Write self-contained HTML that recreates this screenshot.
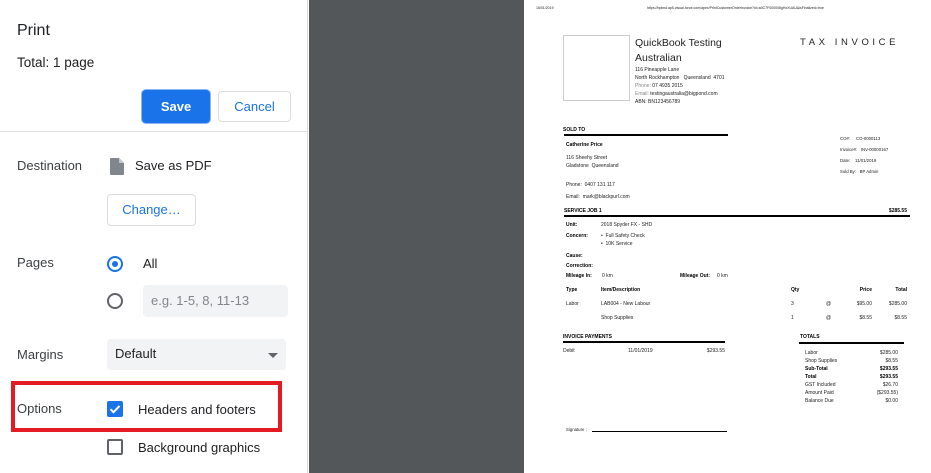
<!DOCTYPE html>
<html><head><meta charset="utf-8"><style>
*{margin:0;padding:0;box-sizing:border-box}
body{width:931px;height:473px;overflow:hidden;position:relative;background:#fff;font-family:"Liberation Sans",sans-serif;color:#202124}
.a{position:absolute;white-space:nowrap}
.l{font-size:13px;color:#3c4043}
.p{font-size:5px;color:#222;line-height:1}
.b{font-weight:bold;color:#000}
.rule{position:absolute;height:2px;background:#000}
</style></head><body>
<div class="a" style="left:0;top:0;width:308px;height:473px;background:#fff;border-right:1px solid #dadce0"></div>
<div class="a" style="left:309px;top:0;width:215px;height:473px;background:#53575a"></div>
<div class="a" style="left:524px;top:1px;width:407px;height:472px;background:#fff"></div>

<div class="a" style="left:17px;top:22px;font-size:16px;color:#202124">Print</div>
<div class="a" style="left:17px;top:55px;font-size:13.5px;color:#202124">Total: 1 page</div>
<div class="a" style="left:142px;top:90px;width:68px;height:33px;background:#1a73e8;border-radius:4px;color:#fff;font-size:13px;font-weight:bold;text-align:center;line-height:33px;box-shadow:0 0 0 1px #8ab4f8">Save</div>
<div class="a" style="left:218px;top:91px;width:73px;height:31px;border:1px solid #dadce0;border-radius:4px;color:#1a73e8;font-size:13px;text-align:center;line-height:29px">Cancel</div>
<div class="a" style="left:0;top:131px;width:308px;height:1px;background:#e0e0e0"></div>

<div class="a l" style="left:17px;top:158px">Destination</div>
<svg class="a" style="left:110px;top:158px" width="14" height="17" viewBox="0 0 14 17"><path d="M1 0h8l5 5v11a1 1 0 0 1-1 1H1a1 1 0 0 1-1-1V1a1 1 0 0 1 1-1z" fill="#80868b"/><path d="M9 0v5h5z" fill="#c4c7ca"/></svg>
<div class="a l" style="left:135px;top:158px;color:#202124">Save as PDF</div>
<div class="a" style="left:107px;top:194px;width:89px;height:32px;border:1px solid #dadce0;border-radius:4px;color:#1a73e8;font-size:13px;text-align:center;line-height:30px">Change…</div>

<div class="a l" style="left:17px;top:255px">Pages</div>
<div class="a" style="left:107px;top:256px;width:16px;height:16px;border:2px solid #1a73e8;border-radius:50%"><div style="position:absolute;left:3px;top:3px;width:6px;height:6px;background:#1a73e8;border-radius:50%"></div></div>
<div class="a l" style="left:143px;top:256px;color:#202124">All</div>
<div class="a" style="left:107px;top:293px;width:16px;height:16px;border:2px solid #5f6368;border-radius:50%"></div>
<div class="a" style="left:143px;top:285px;width:145px;height:32px;background:#f1f3f4;border-radius:4px;font-size:13px;color:#80868b;padding:8px 0 0 8px">e.g. 1-5, 8, 11-13</div>

<div class="a l" style="left:17px;top:347px">Margins</div>
<div class="a" style="left:107px;top:339px;width:179px;height:31px;background:#f1f3f4;border-radius:4px;font-size:13px;color:#202124;padding:7px 0 0 8px">Default</div>
<div class="a" style="left:268px;top:353px;width:0;height:0;border-left:5px solid transparent;border-right:5px solid transparent;border-top:5px solid #5f6368"></div>

<div class="a" style="left:11px;top:381px;width:271px;height:51px;border:4px solid #e51b24"></div>
<div class="a l" style="left:17px;top:401px">Options</div>
<div class="a" style="left:107px;top:401px;width:16px;height:16px;background:#1a73e8;border-radius:2px"><svg width="16" height="16" viewBox="0 0 16 16"><path d="M3.5 8.2l3 3 6-6.2" stroke="#fff" stroke-width="2" fill="none"/></svg></div>
<div class="a l" style="left:138px;top:402px;color:#202124">Headers and footers</div>
<div class="a" style="left:107px;top:439px;width:16px;height:16px;border:2px solid #5f6368;border-radius:2px"></div>
<div class="a l" style="left:138px;top:440px;color:#202124">Background graphics</div>

<!-- page -->
<div class="a p" style="left:536px;top:7px;font-size:3.5px">16/01/2019</div>
<div class="a p" style="left:647px;top:7px;font-size:3.5px">https://bplmd.ap5.visual.force.com/apex/PrintCustomerOrderInvoice?id=a0C7F000008gHxXUAU&amp;isFinalized=true</div>
<div class="a" style="left:563px;top:35px;width:67px;height:66px;border:1px solid #ccc"></div>
<div class="a" style="left:635px;top:37px;font-size:10.5px;color:#222">QuickBook Testing</div>
<div class="a" style="left:635px;top:52px;font-size:10.5px;color:#222">Australian</div>
<div class="a p" style="left:635px;top:68px">116 Pineapple Lane</div>
<div class="a p" style="left:635px;top:76px">North Rockhampton &nbsp; Queensland &nbsp;4701</div>
<div class="a p" style="left:635px;top:84px"><span style="color:#888">Phone:</span> 07 4935 2015</div>
<div class="a p" style="left:635px;top:92px"><span style="color:#888">Email:</span> testingaustralia@bigpond.com</div>
<div class="a p" style="left:635px;top:100px">ABN: BN123456789</div>
<div class="a" style="left:800px;top:37px;font-size:9.5px;letter-spacing:3.6px;color:#222">TAX INVOICE</div>

<div class="a p b" style="left:563px;top:128px">SOLD TO</div>
<div class="rule" style="left:564px;top:134px;width:164px"></div>
<div class="a p b" style="left:566px;top:143px">Catherine Price</div>
<div class="a p" style="left:566px;top:156px">116 Sheehy Street</div>
<div class="a p" style="left:566px;top:164px">Gladstone &nbsp;Queensland</div>
<div class="a p" style="left:566px;top:183px">Phone: &nbsp;0407 131 117</div>
<div class="a p" style="left:566px;top:195px">Email: &nbsp;mark@blackpurl.com</div>
<div class="a p" style="left:840px;top:137px;font-size:4.3px">CO#: &nbsp; &nbsp; CO-0000113</div>
<div class="a p" style="left:840px;top:148px;font-size:4.3px">Invoice#: &nbsp; INV-00000167</div>
<div class="a p" style="left:840px;top:159px;font-size:4.3px">Date: &nbsp; &nbsp;11/01/2019</div>
<div class="a p" style="left:840px;top:170px;font-size:4.3px">Sold By: &nbsp; BP Admin</div>

<div class="a p b" style="left:564px;top:209px">SERVICE JOB 1</div>
<div class="a p b" style="left:877px;top:209px;width:30px;text-align:right">$285.55</div>
<div class="rule" style="left:564px;top:215px;width:346px"></div>
<div class="a p b" style="left:566px;top:223px">Unit:</div><div class="a p" style="left:601px;top:223px">2018 Spyder FX - SHD</div>
<div class="a p b" style="left:566px;top:234px">Concern:</div>
<div class="a p" style="left:601px;top:234px">• &nbsp;Full Safety Check</div>
<div class="a p" style="left:601px;top:242px">• &nbsp;10K Service</div>
<div class="a p b" style="left:566px;top:254px">Cause:</div>
<div class="a p b" style="left:566px;top:264px">Correction:</div>
<div class="a p b" style="left:566px;top:274px">Mileage In:</div><div class="a p" style="left:602px;top:274px">0 km</div>
<div class="a p b" style="left:680px;top:274px">Mileage Out:</div><div class="a p" style="left:717px;top:274px">0 km</div>
<div class="a p b" style="left:566px;top:288px">Type</div><div class="a p b" style="left:601px;top:288px">Item/Description</div>
<div class="a p b" style="left:791px;top:288px">Qty</div>
<div class="a p b" style="left:852px;top:288px;width:20px;text-align:right">Price</div>
<div class="a p b" style="left:887px;top:288px;width:20px;text-align:right">Total</div>
<div class="a p" style="left:566px;top:302px">Labor</div><div class="a p" style="left:601px;top:302px">LAB004 - New Labour</div>
<div class="a p" style="left:791px;top:302px">3</div><div class="a p" style="left:826px;top:302px">@</div>
<div class="a p" style="left:842px;top:302px;width:30px;text-align:right">$95.00</div>
<div class="a p" style="left:877px;top:302px;width:30px;text-align:right">$285.00</div>
<div class="a p" style="left:601px;top:316px">Shop Supplies</div>
<div class="a p" style="left:791px;top:316px">1</div><div class="a p" style="left:826px;top:316px">@</div>
<div class="a p" style="left:842px;top:316px;width:30px;text-align:right">$8.55</div>
<div class="a p" style="left:877px;top:316px;width:30px;text-align:right">$8.55</div>

<div class="a p b" style="left:563px;top:335px">INVOICE PAYMENTS</div>
<div class="rule" style="left:563px;top:341px;width:162px"></div>
<div class="a p" style="left:563px;top:349px">Debit</div>
<div class="a p" style="left:628px;top:349px">11/01/2019</div>
<div class="a p" style="left:695px;top:349px;width:30px;text-align:right">$293.55</div>

<div class="a p b" style="left:800px;top:335px">TOTALS</div>
<div class="rule" style="left:799px;top:342px;width:105px"></div>
<div class="a p" style="left:805px;top:349px;line-height:8px">Labor<br>Shop Supplies<br><b style="color:#000">Sub-Total</b><br><b style="color:#000">Total</b><br>GST Included<br>Amount Paid<br>Balance Due</div>
<div class="a p" style="left:858px;top:349px;width:40px;text-align:right;line-height:8px">$285.00<br>$8.55<br><b style="color:#000">$293.55</b><br><b style="color:#000">$293.55</b><br>$26.70<br>($293.55)<br>$0.00</div>

<div class="a p" style="left:566px;top:428px;font-size:4.3px">Signature :</div>
<div class="a" style="left:592px;top:431px;width:135px;height:1px;background:#000"></div>
</body></html>
